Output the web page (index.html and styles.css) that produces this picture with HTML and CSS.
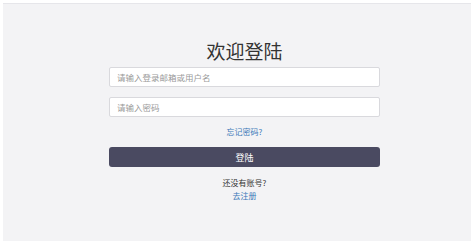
FILE: index.html
```html
<!DOCTYPE html>
<html lang="zh-CN">
<head>
<meta charset="utf-8">
<title>欢迎登陆</title>
<link rel="stylesheet" href="styles.css">
</head>
<body>
<div class="page">
  <form class="login">
    <h1 class="title">欢迎登陆</h1>
    <input class="field field-user" type="text" placeholder="请输入登录邮箱或用户名">
    <input class="field field-pass" type="password" placeholder="请输入密码">
    <a class="link forgot" href="#">忘记密码?</a>
    <button class="submit" type="button">登陆</button>
    <p class="note">还没有账号?</p>
    <a class="link register" href="#">去注册</a>
  </form>
</div>
</body>
</html>
```
FILE: styles.css
```css
html, body {
  margin: 0;
  padding: 0;
  background: #ffffff;
  height: 100%;
}
body {
  font-family: "Noto Sans CJK SC", "Noto Sans", sans-serif;
  color: #333;
}
.page {
  margin: 3px 3px 0 3px;
  height: 238px;
  background: #f3f3f5;
  border-top: 1px solid #e6e6ea;
  box-sizing: border-box;
  padding-top: 36px;
}
.login {
  width: 271px;
  margin-left: 106px;
  display: flex;
  flex-direction: column;
  align-items: center;
}
.title {
  margin: 0;
  font-size: 19px;
  font-weight: normal;
  line-height: 22px;
  color: #333;
}
.field {
  width: 100%;
  height: 20px;
  box-sizing: border-box;
  border: 1px solid #d9d9dd;
  border-radius: 2px;
  background: #fff;
  padding: 0 7px;
  font-family: inherit;
  font-size: 8.5px;
  color: #555;
  outline: none;
}
.field::placeholder {
  color: #9a9a9a;
}
.field-user {
  margin-top: 5px;
}
.field-pass {
  margin-top: 10px;
}
.link {
  color: #3a78b8;
  text-decoration: none;
  font-size: 8px;
  line-height: 10px;
}
.forgot {
  margin-top: 9.5px;
}
.submit {
  margin-top: 10.5px;
  width: 100%;
  height: 20px;
  border: none;
  border-radius: 3px;
  background: #4a4a61;
  color: #fff;
  font-family: inherit;
  font-size: 9px;
  padding: 0;
}
.note {
  margin: 11px 0 0 0;
  font-size: 8px;
  line-height: 10px;
  color: #333;
}
.register {
  margin-top: 2.5px;
}
```
